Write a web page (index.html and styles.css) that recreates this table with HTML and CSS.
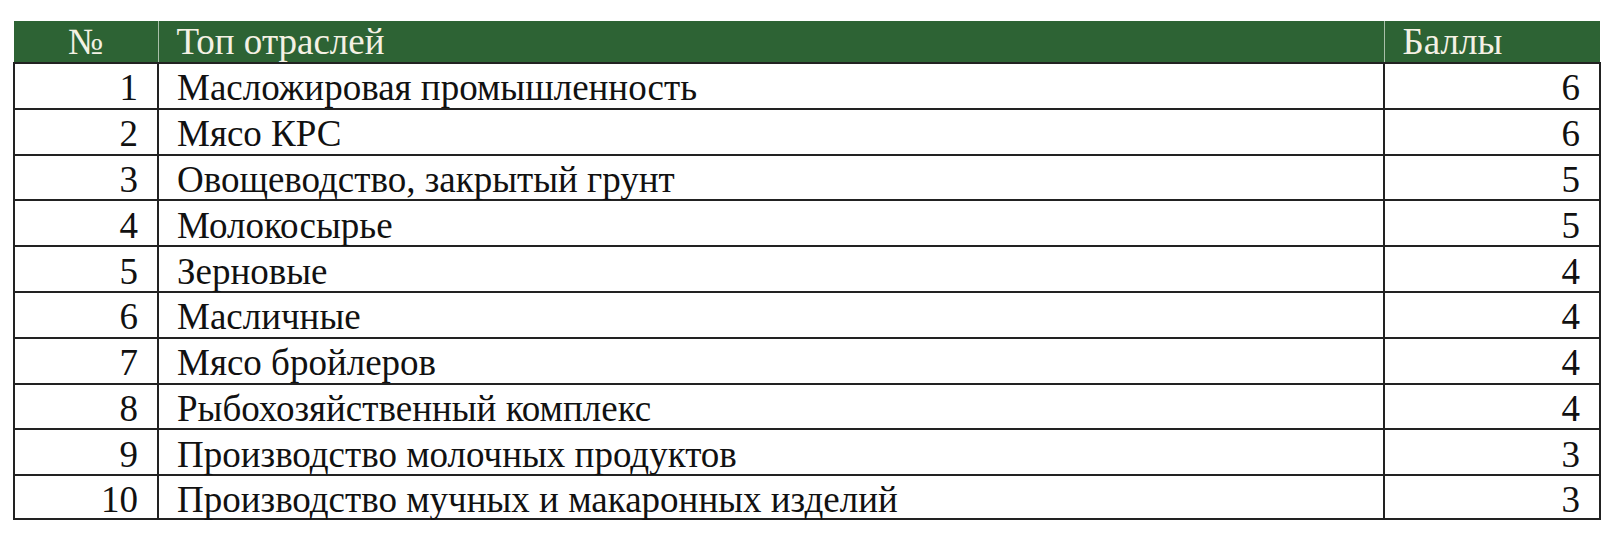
FILE: index.html
```html
<!DOCTYPE html>
<html lang="ru">
<head>
<meta charset="utf-8">
<link rel="stylesheet" href="styles.css">
</head>
<body>
<div class="page">
<table class="rank">
  <colgroup><col class="c-num"><col class="c-name"><col class="c-score"></colgroup>
  <thead>
    <tr><th class="num-h">№</th><th>Топ отраслей</th><th>Баллы</th></tr>
  </thead>
  <tbody>
    <tr><td class="num">1</td><td>Масложировая промышленность</td><td class="score">6</td></tr>
    <tr><td class="num">2</td><td>Мясо КРС</td><td class="score">6</td></tr>
    <tr><td class="num">3</td><td>Овощеводство, закрытый грунт</td><td class="score">5</td></tr>
    <tr><td class="num">4</td><td>Молокосырье</td><td class="score">5</td></tr>
    <tr><td class="num">5</td><td>Зерновые</td><td class="score">4</td></tr>
    <tr><td class="num">6</td><td>Масличные</td><td class="score">4</td></tr>
    <tr><td class="num">7</td><td>Мясо бройлеров</td><td class="score">4</td></tr>
    <tr><td class="num">8</td><td>Рыбохозяйственный комплекс</td><td class="score">4</td></tr>
    <tr><td class="num">9</td><td>Производство молочных продуктов</td><td class="score">3</td></tr>
    <tr class="last"><td class="num">10</td><td>Производство мучных и макаронных изделий</td><td class="score">3</td></tr>
  </tbody>
</table>
</div>
</body>
</html>
```
FILE: styles.css
```css
html, body { margin: 0; padding: 0; background: #ffffff; }
.page { padding: 21px 16px 0 13px; }
.rank {
  width: 1588px;
  border-collapse: collapse;
  table-layout: fixed;
  font-family: "Liberation Serif", "Times New Roman", serif;
  font-size: 37px;
  color: #111;
}
.c-num { width: 144px; }
.c-score { width: 216px; }
.rank th {
  background: #2d6334;
  color: #f4f1e4;
  font-weight: normal;
  text-align: left;
  height: 42px;
  padding: 0 18px;
  border-left: 1px solid #a9bfa9;
  line-height: 1;
  box-sizing: border-box;
}
.rank th:first-child { border-left: none; }
.rank th.num-h { text-align: center; }
.rank td {
  height: 45.8px;
  padding: 4px 19px 0 18px;
  border: 2px solid #222;
  line-height: 1;
  box-sizing: border-box;
}
.rank tr.last td { height: 44px; }
.rank td.num, .rank td.score { text-align: right; }
```
